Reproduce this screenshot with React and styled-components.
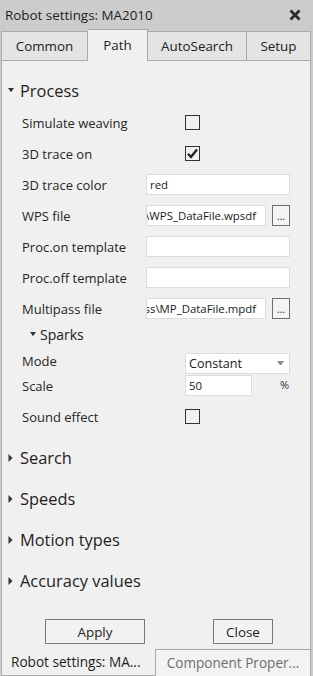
import React from "react";
import styled, { createGlobalStyle } from "styled-components";

const Global = createGlobalStyle`
  html, body { margin: 0; padding: 0; background: #cccccc; }
  body { font-family: "Open Sans", "Noto Sans", sans-serif; color: #1e1e1e; }
  * { box-sizing: border-box; }
`;

const Window = styled.div`
  width: 313px;
  height: 676px;
  display: flex;
  flex-direction: column;
  background: #cccccc;
  overflow: hidden;
`;

const TitleBar = styled.div`
  height: 29px;
  flex: none;
  display: flex;
  align-items: center;
  justify-content: space-between;
  padding: 0 12px 0 5px;
  font-size: 13.4px;
  color: #1e1e1e;
`;

const CloseIcon = styled.svg`
  width: 12px;
  height: 12px;
  display: block;
`;

const TabStrip = styled.div`
  height: 31px;
  flex: none;
  display: flex;
  align-items: flex-end;
  padding-left: 1px;
  position: relative;
  z-index: 2;
`;

const Tab = styled.div`
  width: ${(p) => p.$w}px;
  height: ${(p) => (p.$active ? 32 : 29)}px;
  margin-bottom: ${(p) => (p.$active ? -1 : 0)}px;
  border: 1px solid #a9a9a9;
  border-bottom: none;
  border-left: ${(p) => (p.$first ? "1px solid #a9a9a9" : "none")};
  background: ${(p) => (p.$active ? "#f0f0f0" : "#e4e4e4")};
  display: flex;
  align-items: center;
  justify-content: center;
  padding-bottom: ${(p) => (p.$active ? 2 : 0)}px;
  font-size: 13.4px;
  color: #222;
`;

const Panel = styled.div`
  flex: 1;
  margin: 0 2px 0 1px;
  border: 1px solid #a9a9a9;
  border-bottom: none;
  background: #f0f0f0;
  display: flex;
  flex-direction: column;
`;

const Heading = styled.div`
  height: ${(p) => p.$h}px;
  margin-top: ${(p) => p.$mt || 0}px;
  display: flex;
  align-items: center;
  padding-left: 5px;
  font-size: 16.4px;
  color: #1e1e1e;
`;

const ArrowBox = styled.span`
  width: 7px;
  margin-right: ${(p) => (p.$gap != null ? p.$gap : 6)}px;
  display: flex;
  align-items: center;
  justify-content: center;
`;

const Row = styled.div`
  height: ${(p) => p.$h || 31}px;
  margin-top: ${(p) => p.$mt || 0}px;
  display: grid;
  grid-template-columns: ${(p) => (p.$sub ? "163px" : "124px")} minmax(0, 1fr);
  align-items: center;
  padding: 0 20px 0 20px;
  font-size: 13px;
  color: #262626;
`;

const Label = styled.span`
  white-space: nowrap;
  transform: translateY(${(p) => p.$dy || 0}px);
`;

const Control = styled.div`
  min-width: 0;
  display: flex;
  align-items: center;
  gap: 6px;
  justify-content: ${(p) => (p.$between ? "space-between" : "flex-start")};
  padding-left: ${(p) => p.$pl || 0}px;
`;

const CheckBox = styled.span`
  width: 15px;
  height: 15px;
  border: 1px solid #333;
  background: transparent;
  display: flex;
  align-items: center;
  justify-content: center;
`;

const TextBox = styled.div`
  flex: ${(p) => (p.$w ? "none" : "1 1 0")};
  width: ${(p) => (p.$w ? `${p.$w}px` : "auto")};
  min-width: 0;
  height: 21px;
  background: #fff;
  border: 1px solid #dcdcdc;
  display: flex;
  align-items: center;
  justify-content: ${(p) => (p.$end ? "flex-end" : "flex-start")};
  overflow: hidden;
  padding: 0 ${(p) => (p.$end ? 9 : 3)}px 0 3px;
  font-size: 11.4px;
  color: #1a1a1a;
  white-space: nowrap;
`;

const Clip = styled.span`
  flex: none;
`;

const DotsButton = styled.div`
  width: 18px;
  height: 21px;
  flex: none;
  border: 1px solid #6f6f6f;
  background: #f4f4f4;
  display: flex;
  align-items: flex-end;
  justify-content: center;
  font-size: 10px;
  line-height: 1;
  padding-bottom: 4px;
  color: #222;
`;

const Select = styled.div`
  flex: 1;
  height: 21px;
  background: #fff;
  border: 1px solid #dcdcdc;
  display: flex;
  align-items: center;
  justify-content: space-between;
  padding: 0 5px 0 3px;
  font-size: 12.6px;
  color: #1a1a1a;
`;

const SubHeading = styled.div`
  height: 20px;
  display: flex;
  align-items: center;
  padding-left: 27px;
  font-size: 14px;
  color: #222;
`;

const Percent = styled.span`
  font-size: 11px;
  color: #333;
  padding-right: 1px;
  transform: translateY(-1px);
`;

const Spacer = styled.div`
  flex: 1;
`;

const ButtonRow = styled.div`
  display: flex;
  gap: 68px;
  padding: 0 0 5px 43px;
`;

const Button = styled.div`
  width: ${(p) => p.$w}px;
  height: 25px;
  border: 1px solid #7a7a7a;
  background: #f2f2f2;
  display: flex;
  align-items: center;
  justify-content: center;
  font-size: 13.4px;
  color: #222;
`;

const BottomBar = styled.div`
  height: 27px;
  flex: none;
  display: flex;
  margin: 0 2px 0 1px;
`;

const BottomTab = styled.div`
  width: ${(p) => p.$w}px;
  height: ${(p) => (p.$active ? 27 : 28)}px;
  background: ${(p) => (p.$active ? "#f0f0f0" : "#f3f3f3")};
  border-left: 1px solid #a9a9a9;
  border-bottom: ${(p) => (p.$active ? "1px solid #a9a9a9" : "none")};
  border-top: ${(p) => (p.$active ? "none" : "1px solid #a9a9a9")};
  border-right: ${(p) => (p.$active ? "none" : "1px solid #a9a9a9")};
  display: flex;
  align-items: center;
  justify-content: ${(p) => (p.$active ? "flex-start" : "center")};
  padding-left: ${(p) => (p.$active ? 9 : 0)}px;
  padding-bottom: ${(p) => (p.$active ? 1 : 2)}px;
  font-size: 13.6px;
  color: ${(p) => (p.$active ? "#1e1e1e" : "#6e6e6e")};
  white-space: nowrap;
`;

const Down = ({ size = 6, color = "#333" }) => (
  <svg width={size} height={size * 0.7} viewBox="0 0 6 4.2" style={{ display: "block" }}>
    <polygon points="0,0 6,0 3,4.2" fill={color} />
  </svg>
);

const Right = () => (
  <svg width="5" height="8" viewBox="0 0 5 8" style={{ display: "block" }}>
    <polygon points="0.5,0 4.5,4 0.5,8" fill="#333" />
  </svg>
);

const Check = () => (
  <svg width="13" height="13" viewBox="0 0 13 13" style={{ display: "block" }}>
    <path d="M2 6.8 L5 10 L11 2.6" fill="none" stroke="#222" strokeWidth="2.4" />
  </svg>
);

function Section({ title, open, h, mt }) {
  return (
    <Heading $h={h} $mt={mt}>
      <ArrowBox>{open ? <Down /> : <Right />}</ArrowBox>
      {title}
    </Heading>
  );
}

export default function App() {
  return (
    <>
      <Global />
      <Window>
        <TitleBar>
          <span>Robot settings: MA2010</span>
          <CloseIcon viewBox="0 0 12 12">
            <path d="M1.5 1.5 L10.5 10.5 M10.5 1.5 L1.5 10.5" stroke="#2b2b2b" strokeWidth="2.8" />
          </CloseIcon>
        </TitleBar>
        <TabStrip>
          <Tab $w={87} $first>Common</Tab>
          <Tab $w={60} $active>Path</Tab>
          <Tab $w={99}>AutoSearch</Tab>
          <Tab $w={64}>Setup</Tab>
        </TabStrip>
        <Panel>
          <Section title="Process" open h={24} mt={17} />
          <Row $mt={5}>
            <Label>Simulate weaving</Label>
            <Control $pl={39}><CheckBox /></Control>
          </Row>
          <Row>
            <Label>3D trace on</Label>
            <Control $pl={39}><CheckBox><Check /></CheckBox></Control>
          </Row>
          <Row>
            <Label>3D trace color</Label>
            <Control><TextBox>red</TextBox></Control>
          </Row>
          <Row>
            <Label>WPS file</Label>
            <Control>
              <TextBox $end><Clip>C:\Process\WPS_DataFile.wpsdf</Clip></TextBox>
              <DotsButton>...</DotsButton>
            </Control>
          </Row>
          <Row>
            <Label>Proc.on template</Label>
            <Control><TextBox /></Control>
          </Row>
          <Row>
            <Label>Proc.off template</Label>
            <Control><TextBox /></Control>
          </Row>
          <Row>
            <Label>Multipass file</Label>
            <Control>
              <TextBox $end><Clip>C:\Process\MP_DataFile.mpdf</Clip></TextBox>
              <DotsButton>...</DotsButton>
            </Control>
          </Row>
          <SubHeading>
            <ArrowBox $gap={4}><Down /></ArrowBox>
            Sparks
          </SubHeading>
          <Row $sub $h={22} $mt={8}>
            <Label $dy={-2}>Mode</Label>
            <Control>
              <Select>
                <span>Constant</span>
                <Down size={7} color="#8a8a8a" />
              </Select>
            </Control>
          </Row>
          <Row $sub $h={22}>
            <Label $dy={1}>Scale</Label>
            <Control $between>
              <TextBox $w={67}>50</TextBox>
              <Percent>%</Percent>
            </Control>
          </Row>
          <Row $sub $mt={5}>
            <Label>Sound effect</Label>
            <Control><CheckBox /></Control>
          </Row>
          <Section title="Search" h={41} mt={5} />
          <Section title="Speeds" h={41} />
          <Section title="Motion types" h={41} />
          <Section title="Accuracy values" h={41} />
          <Spacer />
          <ButtonRow>
            <Button $w={100}>Apply</Button>
            <Button $w={60}>Close</Button>
          </ButtonRow>
        </Panel>
        <BottomBar>
          <BottomTab $w={154} $active>Robot settings: MA...</BottomTab>
          <BottomTab $w={156}>Component Proper...</BottomTab>
        </BottomBar>
      </Window>
    </>
  );
}
